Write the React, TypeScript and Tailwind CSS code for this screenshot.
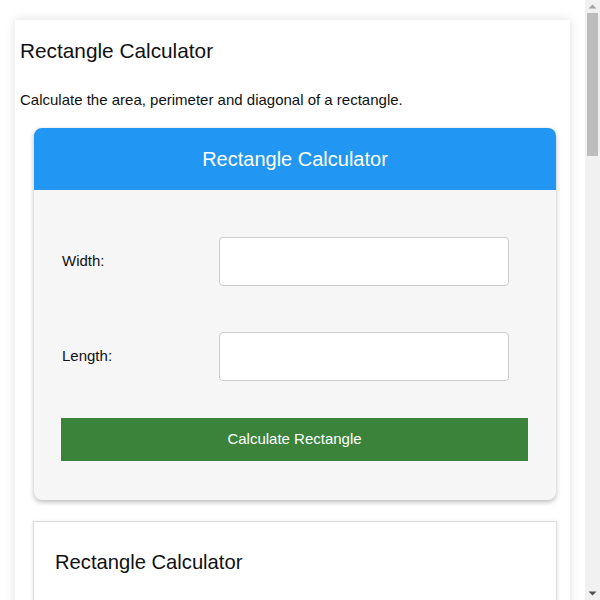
import React from 'react';

const Field: React.FC<{ label: string; className?: string }> = ({ label, className }) => {
  return (
    <div className={`flex items-center ${className ?? ''}`}>
      <label className="w-[158px] text-[15px] leading-[18px] text-[#111] pl-[1px] -mt-[2px]">{label}</label>
      <input
        type="text"
        className="w-[290px] h-[49px] bg-white border border-[#cccccc] rounded-[4px] outline-none px-2 text-[15px]"
      />
    </div>
  );
};

// drawn page scrollbar (the screenshot's browser chrome)
const Scrollbar: React.FC = () => {
  return (
    <div className="w-[15px] h-full bg-[#f1f1f1] flex flex-col items-center shrink-0">
      <div className="h-[13px] w-full flex items-center justify-center">
        <svg width="9" height="5" viewBox="0 0 9 5">
          <path d="M0.5 4.5h8L4.5 0.5z" fill="#a3a3a3" />
        </svg>
      </div>
      <div className="w-[11px] h-[143px] bg-[#bdbdbd]" />
      <div className="flex-1" />
      <div className="h-[13px] w-full flex items-center justify-center">
        <svg width="9" height="5" viewBox="0 0 9 5">
          <path d="M0.5 0.5h8L4.5 4.5z" fill="#505050" />
        </svg>
      </div>
    </div>
  );
};

const App: React.FC = () => {
  return (
    <div className="h-screen flex overflow-hidden bg-white font-['Liberation_Sans',Arial,sans-serif] text-[#111]">
      <div className="flex-1 min-w-0 pt-[20px] px-[15px]">
        <div className="bg-white shadow-[0_0_10px_rgba(0,0,0,0.12)] px-[5px] pt-[19px] pb-[20px]">
          <h1 className="text-[20.8px] leading-[24px] font-normal">Rectangle Calculator</h1>
          <p className="mt-[28px] text-[15px] leading-[18px]">
            Calculate the area, perimeter and diagonal of a rectangle.
          </p>

          <div className="mt-[19px] ml-[14px] w-[522px] rounded-[8px] overflow-hidden bg-[#f6f6f6] shadow-[0_2px_5px_rgba(0,0,0,0.28)]">
            <div className="h-[62px] bg-[#2196F3] flex items-center justify-center">
              <h2 className="text-[20px] leading-[24px] text-white font-normal">Rectangle Calculator</h2>
            </div>
            <div className="pt-[47px] pb-[39px] pl-[27px] pr-[28px]">
              <Field label="Width:" />
              <Field label="Length:" className="mt-[46px]" />
              <button className="mt-[37px] w-[467px] h-[43px] pb-[2px] bg-[#3b833b] text-white text-[15px] leading-[18px]">
                Calculate Rectangle
              </button>
            </div>
          </div>

          <div className="mt-[21px] ml-[13px] w-[524px] bg-white border border-[#dddddd] shadow-[0_1px_4px_rgba(0,0,0,0.12)] pt-[28px] px-[21px] pb-[40px]">
            <h2 className="text-[20.2px] leading-[24px] font-normal">Rectangle Calculator</h2>
            <div className="h-[200px]" />
          </div>
        </div>
      </div>
      <Scrollbar />
    </div>
  );
};

export default App;
